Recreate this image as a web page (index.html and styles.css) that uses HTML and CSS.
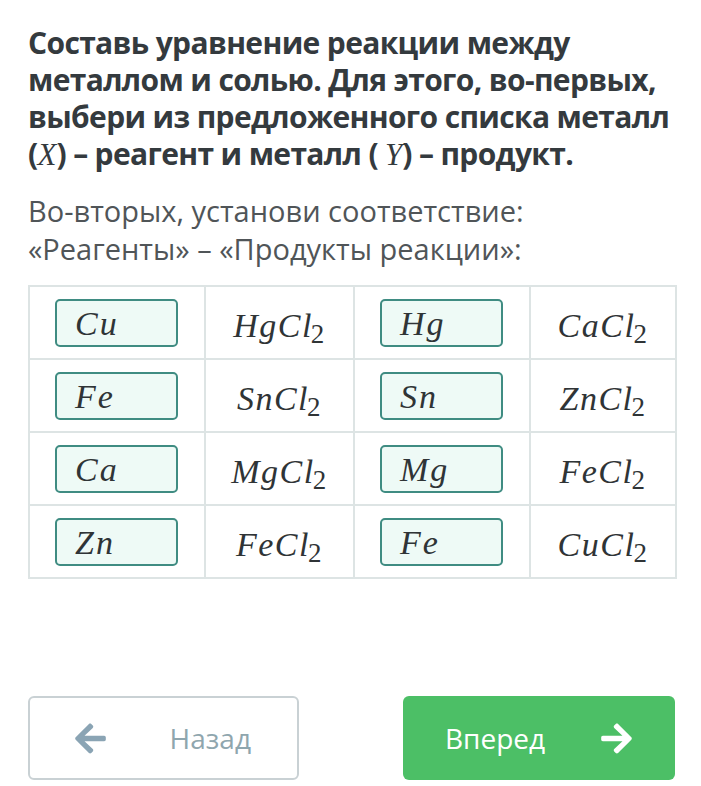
FILE: index.html
```html
<!DOCTYPE html>
<html lang="ru">
<head>
<meta charset="utf-8">
<link rel="stylesheet" href="styles.css">
</head>
<body>
<div class="page">
  <h1 class="title">Составь уравнение реакции между металлом и солью. Для этого, во-первых, выбери из предложенного списка металл (<span class="m">X</span>) – реагент и металл ( <span class="m">Y</span>) – продукт.</h1>
  <p class="sub">Во-вторых, установи соответствие:<br>«Реагенты» – «Продукты реакции»:</p>
  <table class="grid">
    <colgroup><col class="c1"><col class="c2"><col class="c3"><col class="c4"></colgroup>
    <tr>
      <td><div class="chip"><span class="m">Cu</span></div></td>
      <td class="f"><span class="m">HgCl</span><span class="s">2</span></td>
      <td><div class="chip"><span class="m">Hg</span></div></td>
      <td class="f"><span class="m">CaCl</span><span class="s">2</span></td>
    </tr>
    <tr>
      <td><div class="chip"><span class="m">Fe</span></div></td>
      <td class="f"><span class="m">SnCl</span><span class="s">2</span></td>
      <td><div class="chip"><span class="m">Sn</span></div></td>
      <td class="f"><span class="m">ZnCl</span><span class="s">2</span></td>
    </tr>
    <tr>
      <td><div class="chip"><span class="m">Ca</span></div></td>
      <td class="f"><span class="m">MgCl</span><span class="s">2</span></td>
      <td><div class="chip"><span class="m">Mg</span></div></td>
      <td class="f"><span class="m">FeCl</span><span class="s">2</span></td>
    </tr>
    <tr>
      <td><div class="chip"><span class="m">Zn</span></div></td>
      <td class="f"><span class="m">FeCl</span><span class="s">2</span></td>
      <td><div class="chip"><span class="m">Fe</span></div></td>
      <td class="f"><span class="m">CuCl</span><span class="s">2</span></td>
    </tr>
  </table>
  <div class="nav">
    <button class="btn back">
      <svg class="ico" viewBox="0 0 448 512" width="31" height="35"><path fill="currentColor" d="M257.5 445.1l-22.2 22.2c-9.4 9.4-24.6 9.4-33.9 0L7 273c-9.4-9.4-9.4-24.6 0-33.9L201.4 44.7c9.4-9.4 24.6-9.4 33.9 0l22.2 22.2c9.5 9.5 9.3 25-.4 34.3L136.6 216H424c13.3 0 24 10.7 24 24v32c0 13.3-10.7 24-24 24H136.6l120.5 114.8c9.8 9.3 10 24.8.4 34.3z"/></svg>
      <span>Назад</span>
    </button>
    <button class="btn next">
      <span>Вперед</span>
      <svg class="ico" viewBox="0 0 448 512" width="31" height="35"><path fill="currentColor" d="M190.5 66.9l22.2-22.2c9.4-9.4 24.6-9.4 33.9 0L441 239c9.4 9.4 9.4 24.6 0 33.9L246.6 467.3c-9.4 9.4-24.6 9.4-33.9 0l-22.2-22.2c-9.5-9.5-9.3-25 .4-34.3L311.4 296H24c-13.3 0-24-10.7-24-24v-32c0-13.3 10.7-24 24-24h287.4L190.9 101.2c-9.8-9.3-10-24.8-.4-34.3z"/></svg>
    </button>
  </div>
</div>
</body>
</html>
```
FILE: styles.css
```css
* { box-sizing: border-box; }
html, body { margin: 0; padding: 0; background: #fff; }
.page {
  padding: 24px 18px 0 28px;
  font-family: "Open Sans", "Noto Sans", sans-serif;
}
.title {
  margin: 0;
  font-size: 30px;
  line-height: 37px;
  font-weight: 700;
  letter-spacing: -0.65px;
  color: #343a3e;
}
.title .m { font-weight: 400; font-size: 31px; letter-spacing: 0; }
.m {
  font-family: "Liberation Serif", "DejaVu Serif", serif;
  font-style: italic;
}
.sub {
  margin: 19px 0 0;
  font-size: 29px;
  line-height: 38px;
  font-weight: 400;
  color: #505558;
}
.grid {
  margin-top: 17px;
  border-collapse: collapse;
  width: 647px;
  table-layout: fixed;
}
.c1 { width: 176px; }
.c2 { width: 149px; }
.c3 { width: 176px; }
.c4 { width: 146px; }
.grid td {
  border: 2px solid #dde4e4;
  height: 73px;
  padding: 0;
  vertical-align: middle;
}
.chip {
  margin-left: 25px;
  width: 123px;
  height: 48px;
  border: 2px solid #3f8c82;
  border-radius: 5px;
  background: #eefaf6;
  display: flex;
  align-items: center;
  padding: 3px 0 0 18px;
  font-size: 34px;
  color: #2f3436;
  letter-spacing: 2px;
}
.f {
  text-align: center;
  font-size: 34px;
  color: #2f3436;
  letter-spacing: 1.5px;
  padding-top: 2px !important;
}
.s {
  font-family: "Liberation Serif", serif;
  font-size: 27px;
  position: relative;
  top: 6px;
  margin-left: -2px;
}
.nav {
  margin-top: 117px;
  display: flex;
  justify-content: space-between;
  width: 647px;
}
.btn {
  height: 84px;
  border-radius: 6px;
  font-family: "Open Sans", sans-serif;
  font-size: 28px;
  display: flex;
  align-items: center;
  cursor: pointer;
}
.back {
  width: 271px;
  background: #fff;
  border: 2px solid #c9d1d4;
  color: #8fa6ae;
  padding: 0 46px 0 45px;
  justify-content: space-between;
}
.next {
  width: 272px;
  background: #4cbf66;
  border: none;
  color: #fff;
  padding: 0 43px 0 42px;
  justify-content: space-between;
}
.back .ico { color: #8aa4b4; }
```
